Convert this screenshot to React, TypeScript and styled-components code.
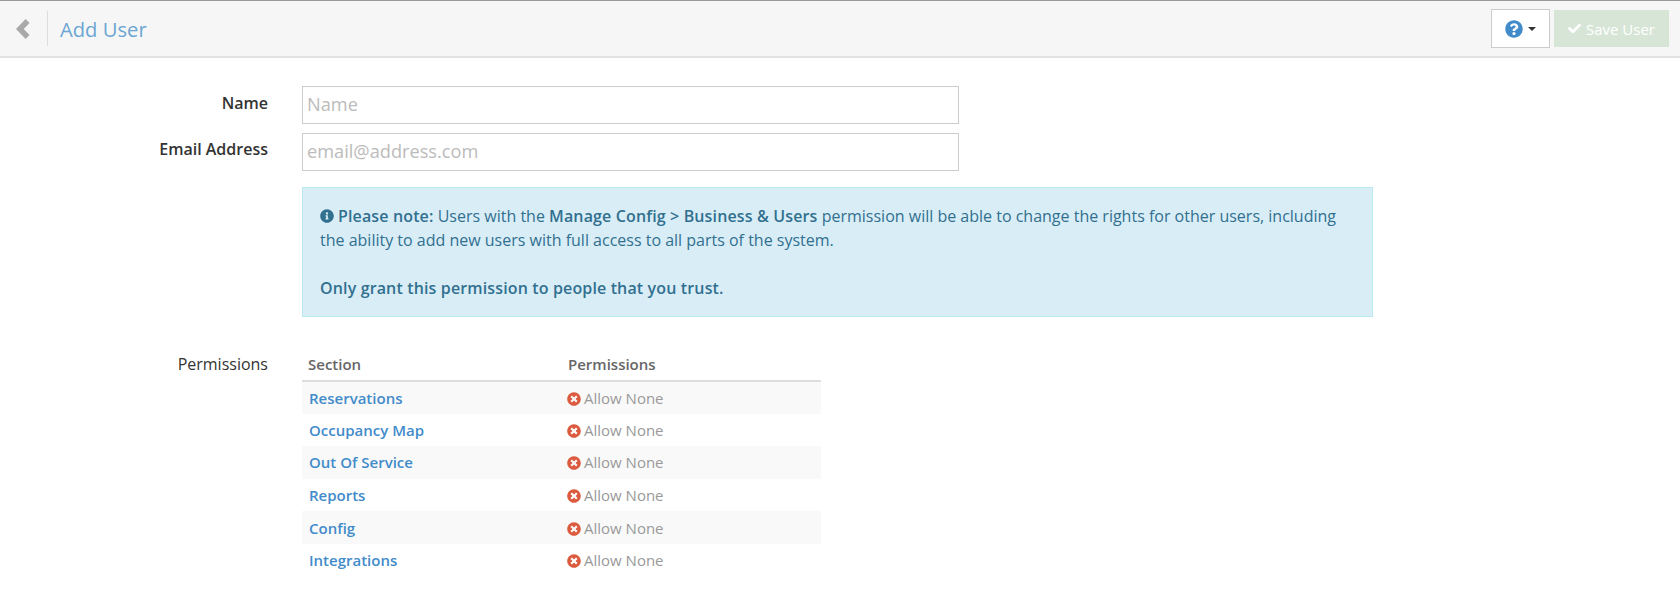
import styled, { createGlobalStyle } from "styled-components";
import { FaQuestionCircle, FaCheck, FaInfoCircle, FaTimesCircle } from "react-icons/fa";

const GlobalStyle = createGlobalStyle`
  html, body {
    margin: 0;
    padding: 0;
    background: #fff;
    font-family: "Open Sans", sans-serif;
    font-size: 15px;
    color: #333;
  }
  * {
    box-sizing: border-box;
  }
`;

const Page = styled.div`
  width: 1680px;
  height: 593px;
  overflow: hidden;
`;

const Toolbar = styled.div`
  height: 58px;
  display: flex;
  align-items: center;
  background: #f6f6f6;
  border-top: 1px solid #999;
  border-bottom: 2px solid #e2e2e2;
  padding: 0 11px 0 16px;
`;

const BackBtn = styled.a`
  width: 32px;
  height: 35px;
  display: flex;
  align-items: center;
  color: #a9a9a9;
  border-right: 1px solid #dcdcdc;
`;

const Title = styled.h1`
  flex: 1;
  margin: 0 0 0 12px;
  font-size: 20.2px;
  font-weight: 400;
  color: #6ba5d3;
`;

const HelpBtn = styled.button`
  width: 59px;
  height: 39px;
  display: flex;
  align-items: center;
  justify-content: center;
  gap: 5px;
  background: #fff;
  border: 1px solid #ccc;
  color: #428bca;
  font-size: 18px;
  padding: 0;
  margin-right: 4px;
`;

const Caret = styled.span`
  border-top: 4px solid #333;
  border-left: 4px solid transparent;
  border-right: 4px solid transparent;
`;

const SaveBtn = styled.button`
  height: 37px;
  width: 115px;
  display: flex;
  align-items: center;
  justify-content: center;
  gap: 5px;
  background: #d7e5d6;
  border: none;
  color: #fff;
  font-family: inherit;
  font-size: 15px;
  padding: 0;
`;

const Form = styled.div`
  padding-top: 28px;
  display: flex;
  flex-direction: column;
`;

const Row = styled.div<{ $gap?: number }>`
  display: grid;
  grid-template-columns: 268px 1fr;
  column-gap: 34px;
  margin-bottom: ${(p) => p.$gap ?? 0}px;
`;

const Label = styled.label<{ $bold?: boolean; $top?: number }>`
  text-align: right;
  font-size: 16px;
  line-height: 20px;
  padding-top: ${(p) => p.$top ?? 6}px;
  font-weight: ${(p) => (p.$bold ? 600 : 400)};
  color: #333;
`;

const Input = styled.input`
  display: block;
  width: 657px;
  height: 38px;
  border: 1px solid #ccc;
  padding: 0 4px 2px;
  font-family: inherit;
  font-size: 18.2px;
  color: #333;
  &::placeholder {
    color: #bbb;
    opacity: 1;
  }
`;

const Alert = styled.div`
  width: 1071px;
  height: 130px;
  background: #d9edf7;
  border: 1px solid #bce8f1;
  color: #31708f;
  font-size: 16px;
  line-height: 24px;
  padding: 16px 17px;
  b {
    font-weight: 600;
    letter-spacing: 0.14px;
  }
  svg {
    font-size: 14px;
    vertical-align: -1px;
    margin-right: 4px;
  }
`;

const Spacer = styled.div`
  height: 31px;
`;

const Table = styled.table`
  width: 519px;
  border-collapse: collapse;
  font-size: 15px;
`;

const Th = styled.th`
  text-align: left;
  font-weight: 600;
  color: #666;
  height: 33px;
  padding: 0 6px;
  border-bottom: 2px solid #ddd;
  &:first-child {
    width: 260px;
  }
`;

const Tr = styled.tr`
  height: 32.6px;
  &:nth-child(odd) {
    background: #f9f9f9;
  }
`;

const SectionCell = styled.td`
  padding: 0 7px;
  color: #428bca;
  font-weight: 600;
`;

const PermCell = styled.td`
  padding: 0 5px;
  color: #999;
  svg {
    color: #dc5a3e;
    font-size: 14px;
    vertical-align: -2px;
    margin-right: 3px;
  }
`;

const sections = ["Reservations", "Occupancy Map", "Out Of Service", "Reports", "Config", "Integrations"];

function App() {
  return (
    <Page>
      <GlobalStyle />
      <Toolbar>
        <BackBtn>
          <svg width="14" height="20" viewBox="0 0 16 22" preserveAspectRatio="none" fill="currentColor">
            <path d="M11 0l4.5 4.3L8.8 11l6.7 6.7L11 22 0 11z" />
          </svg>
        </BackBtn>
        <Title>Add User</Title>
        <HelpBtn>
          <FaQuestionCircle />
          <Caret />
        </HelpBtn>
        <SaveBtn>
          <FaCheck size={13} />
          Save User
        </SaveBtn>
      </Toolbar>
      <Form>
        <Row $gap={9}>
          <Label $bold $top={7}>Name</Label>
          <Input placeholder="Name" />
        </Row>
        <Row $gap={16}>
          <Label $bold>Email Address</Label>
          <Input placeholder="email@address.com" />
        </Row>
        <Row>
          <div />
          <Alert>
            <FaInfoCircle />
            <b>Please note:</b> Users with the <b>Manage Config &gt; Business &amp; Users</b> permission will be able
            to change the rights for other users, including the ability to add new users with full access to all parts
            of the system.
            <br />
            <br />
            <b>Only grant this permission to people that you trust.</b>
          </Alert>
        </Row>
        <Spacer />
        <Row>
          <Label>Permissions</Label>
          <Table>
            <thead>
              <tr>
                <Th>Section</Th>
                <Th>Permissions</Th>
              </tr>
            </thead>
            <tbody>
              {sections.map((s) => (
                <Tr key={s}>
                  <SectionCell>{s}</SectionCell>
                  <PermCell>
                    <FaTimesCircle />
                    Allow None
                  </PermCell>
                </Tr>
              ))}
            </tbody>
          </Table>
        </Row>
      </Form>
    </Page>
  );
}

export default App;
